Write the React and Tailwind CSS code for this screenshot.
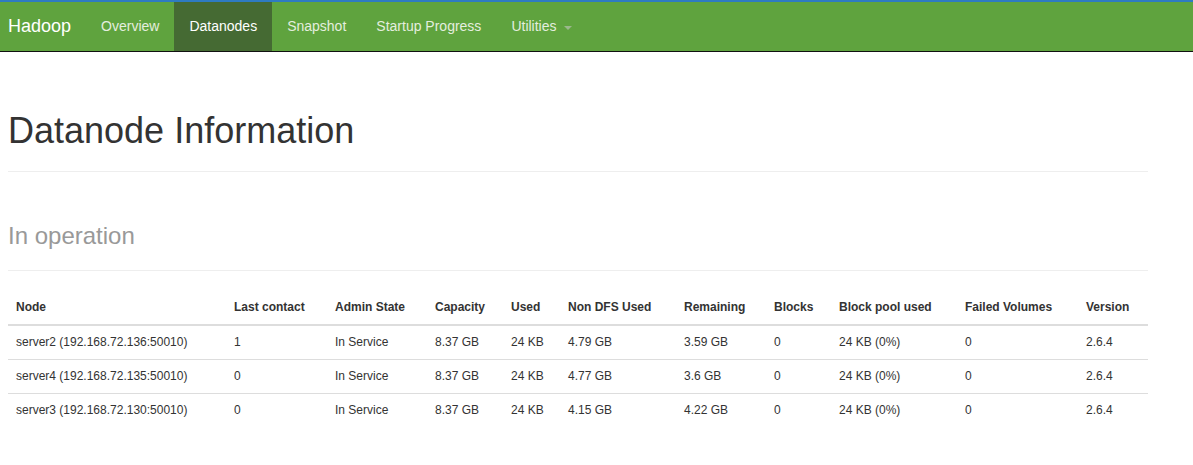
import React from "react";

const nav_links = [
  { name: "Overview" },
  { name: "Datanodes", active: true },
  { name: "Snapshot" },
  { name: "Startup Progress" },
  { name: "Utilities", caret: true },
];

const columns = [
  { name: "Node", w: "w-[218px]" },
  { name: "Last contact", w: "w-[101px]" },
  { name: "Admin State", w: "w-[100px]" },
  { name: "Capacity", w: "w-[76px]" },
  { name: "Used", w: "w-[57px]" },
  { name: "Non DFS Used", w: "w-[116px]" },
  { name: "Remaining", w: "w-[90px]" },
  { name: "Blocks", w: "w-[65px]" },
  { name: "Block pool used", w: "w-[126px]" },
  { name: "Failed Volumes", w: "w-[121px]" },
  { name: "Version", w: "w-[70px]" },
];

const datanodes = [
  ["server2 (192.168.72.136:50010)", "1", "In Service", "8.37 GB", "24 KB", "4.79 GB", "3.59 GB", "0", "24 KB (0%)", "0", "2.6.4"],
  ["server4 (192.168.72.135:50010)", "0", "In Service", "8.37 GB", "24 KB", "4.77 GB", "3.6 GB", "0", "24 KB (0%)", "0", "2.6.4"],
  ["server3 (192.168.72.130:50010)", "0", "In Service", "8.37 GB", "24 KB", "4.15 GB", "4.22 GB", "0", "24 KB (0%)", "0", "2.6.4"],
];

const App = () => {
  return (
    <div className="min-h-[465px] bg-white font-['Liberation_Sans',Arial,sans-serif] text-[#333]">
      {/* Navbar */}
      <div className="border-t-2 border-t-[#2e7bc2] border-b border-b-[#111] bg-[#5fa33e] h-[52px]">
        <div className="flex items-stretch h-full pl-2">
          <div className="flex items-center text-[18px] text-white pr-[15px]">Hadoop</div>
          {nav_links.map((res, index) => (
            <div
              key={index}
              className={`flex items-center px-[15px] text-[14px] ${res.active ? "bg-[#456a33] text-white" : "text-[#e4eedf]"}`}
            >
              {res.name}
              {res.caret && <span className="ml-[7px] mt-[2px] border-x-[4px] border-x-transparent border-t-[4px] border-t-[#9bb88c]" />}
            </div>
          ))}
        </div>
      </div>

      {/* Content */}
      <div className="w-[1140px] ml-2">
        <div className="pt-[59px] pb-[20px] border-b border-[#eee]">
          <h1 className="text-[36px] leading-[40px] text-[#333]">Datanode Information</h1>
        </div>
        <div className="pt-[50px] pb-[21px] border-b border-[#eee]">
          <h2 className="text-[24px] leading-[27px] text-[#999]">In operation</h2>
        </div>

        <table className="table-fixed w-full mt-[20px] text-[12px] leading-[17px] border-collapse">
          <colgroup>
            {columns.map((col, index) => (
              <col key={index} className={col.w} />
            ))}
          </colgroup>
          <thead>
            <tr className="border-b-2 border-[#ddd]">
              {columns.map((col, index) => (
                <th key={index} className="text-left font-bold px-2 py-2 whitespace-nowrap">
                  {col.name}
                </th>
              ))}
            </tr>
          </thead>
          <tbody>
            {datanodes.map((row, index) => (
              <tr key={index} className={index !== 0 ? "border-t border-[#ddd]" : ""}>
                {row.map((cell, cellIndex) => (
                  <td key={cellIndex} className="px-2 py-2 whitespace-nowrap">
                    {cell}
                  </td>
                ))}
              </tr>
            ))}
          </tbody>
        </table>
      </div>
    </div>
  );
};

export default App;
